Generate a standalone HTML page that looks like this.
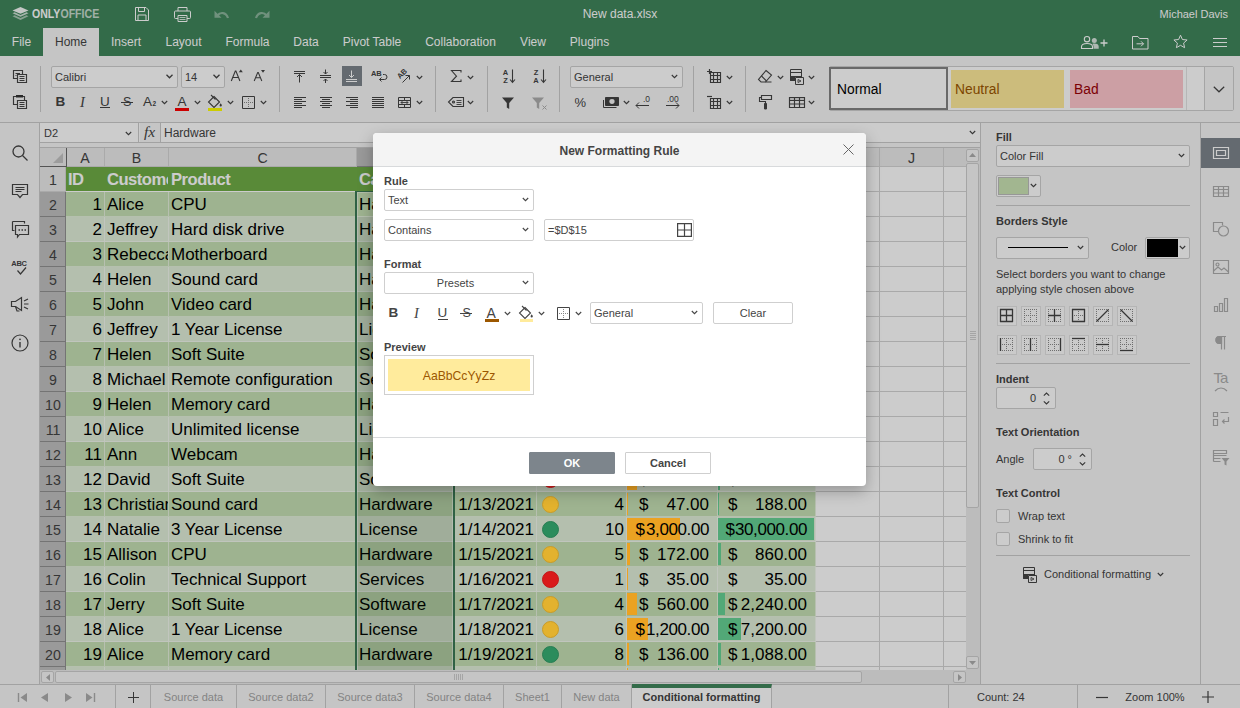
<!DOCTYPE html>
<html lang="en">
<head>
<meta charset="utf-8">
<title>New data.xlsx</title>
<style>
*{box-sizing:border-box;margin:0;padding:0}
html,body{width:1240px;height:708px;overflow:hidden;background:#f7f7f7}
body{font-family:"Liberation Sans",Arial,sans-serif;font-size:11px;color:#444;position:relative}
.abs{position:absolute}
svg{display:block;overflow:visible}
/* header */
#hdr{position:absolute;left:0;top:0;width:1240px;height:56px;background:#40865c;color:#fff}
#hdr .title{position:absolute;left:0;width:1240px;top:7px;text-align:center;font-size:12px;line-height:14px}
#hdr .user{position:absolute;right:12px;top:7px;font-size:11px;line-height:14px}
#hdr .logo{position:absolute;left:11.500px;top:7px}
#hdr .logotxt{position:absolute;left:31.500px;top:7px;font-size:12.300px;line-height:14px;font-weight:bold;color:#fff;transform:scaleX(.86);transform-origin:0 0;white-space:nowrap}
#hdr .logotxt span{opacity:.72}
.tab{position:absolute;top:28px;height:28px;line-height:28px;font-size:12px;text-align:center;color:#fff}
.tab.act{background:#f7f7f7;color:#444}
.hic{position:absolute}
/* toolbar */
#tb{position:absolute;left:0;top:56px;width:1240px;height:67px;background:#f7f7f7;border-bottom:1px solid #cbcbcb}
.sep{position:absolute;top:66px;width:1px;height:46px;background:#cbcbcb}
.combo{position:absolute;height:22px;background:#fff;border:1px solid #cfcfcf;border-radius:2px;font-size:11px;line-height:20px;padding-left:3px;color:#444;white-space:nowrap}
.combo .car{position:absolute;right:4px;top:7px}
.ti{position:absolute;width:20px;height:20px}
.car{width:7px;height:5px}
/* left */
#left{position:absolute;left:0;top:123px;width:40px;height:561px;background:#f7f7f7;border-right:1px solid #cbcbcb}
/* formula bar */
#fb{position:absolute;left:40px;top:123px;width:940px;height:20px;background:#fff;border-bottom:1px solid #cbcbcb}
#fb .name{position:absolute;left:0;top:0;width:99px;height:19px;border-right:1px solid #cbcbcb;line-height:21px;padding-left:4px;font-size:11px}
#fb .fx{position:absolute;left:100px;top:0;width:21px;height:19px;border-right:1px solid #cbcbcb;background:#f7f7f7}
#fb .val{position:absolute;left:124px;top:0;line-height:20px;font-size:12px}
#gap{position:absolute;left:40px;top:143px;width:940px;height:5px;background:#f7f7f7;border-bottom:1px solid #cbcbcb}
/* grid */
#grid{position:absolute;left:40px;top:148px;width:926px;height:522px;background:#fff;overflow:hidden;font-family:"Liberation Sans",Arial,sans-serif}
.ch{position:absolute;top:0;height:19px;background:#ebebeb;border-right:1px solid #d5d5d5;border-bottom:1px solid #d5d5d5;text-align:center;font-size:14.2px;line-height:21px;color:#444}
.ch.sel{background:#c1c1c1;border-color:#929292}
.corner{position:absolute;left:0;top:0;width:27px;height:19px;background:#ebebeb;border-right:1px solid #6a6a6a;border-bottom:1px solid #6a6a6a}
.corner i{position:absolute;right:3px;bottom:3px;width:0;height:0;border-left:10px solid transparent;border-bottom:10px solid #c4c4c4}
.rh{position:absolute;left:0;width:26px;height:25px;background:#ebebeb;border-right:1px solid #d5d5d5;border-bottom:1px solid #d5d5d5;text-align:center;font-size:14.2px;line-height:27px;color:#444;padding-left:1px;overflow:hidden}
.rh.sel{background:#c1c1c1;border-color:#929292}
.vl{position:absolute;top:19px;width:1px;height:504px;background:#d4d4d4}
.hl{position:absolute;left:26px;width:901px;height:1px;background:#d4d4d4}
.trow{position:absolute;left:26px;width:750px;height:25px;border-bottom:1px solid rgba(255,255,255,.5);font-size:17px;line-height:26.500px;color:#000}
.trow.thead{background:#70ad47;color:#fff;font-weight:bold;border-bottom-color:#fff}
.trow.b1{background:#c6e0b4}
.trow.b2{background:#e2efda}
.trow .c{position:absolute;top:0;height:24px;overflow:hidden;white-space:nowrap;border-right:1px solid rgba(255,255,255,.55);padding:0 2px 0 2px}
.trow.thead .c{border-right-color:transparent;font-size:16.600px;letter-spacing:-.5px}
.trow .c.r{text-align:right}
.trow .c span{position:relative}
.trow .c em{position:absolute;left:12px;font-style:normal}
.trow .c.acc{padding-right:8px}
.trow .c.acc.h em{left:10px}
.trow .c.acc.tight{letter-spacing:-.4px}
.trow .c.acc.tight em{left:8.500px}
.trow .c.acc.h.tight em{left:7.500px}
.ic{position:absolute;left:4.500px;top:3.500px;width:17px;height:17px;border-radius:50%;z-index:11}
.ic.y{background:#e3b22e;border:1px solid #c99c28}
.ic.g{background:#2b8c5c;border:1px solid #277d52}
.ic.r{background:#d91a1a;border:1px solid #c21616}
.bar{position:absolute;left:0;top:1px;height:22px;z-index:11}
.trow .c.acc span,.trow .c.acc em{z-index:12}
.bar.o{background:#eba222}
.bar.gr{background:#52a877}
.selbox{position:absolute;left:315px;top:43px;width:100px;height:490px;border:2px solid #3b7a55;border-top-width:1px;box-shadow:inset 0 0 0 1px rgba(255,255,255,.45)}
.seltint{position:absolute;left:317px;top:69px;width:97px;height:470px;background:rgba(20,60,20,.12)}

.sbtn{background:#f7f7f7;border:1px solid #cfcfcf;border-radius:2px}
.sthumb{background:#f7f7f7;border:1px solid #cfcfcf;border-radius:2px}
#rp{position:absolute;left:981px;top:123px;width:220px;height:561px;background:#f7f7f7;border-left:0;border-right:1px solid #cbcbcb}
#rpb{position:absolute}
#rp .lb{position:absolute;font-weight:bold;font-size:11px;line-height:14px;white-space:nowrap}
#rp .tx{position:absolute;font-size:11px;line-height:14px;white-space:nowrap}
#rp .hr{position:absolute;left:15px;width:194px;height:1px;background:#cbcbcb}
#rp .bb{position:absolute;width:20px;height:20px;background:#fdfdfd;box-shadow:inset 0 0 0 1px #e3e3e3}
#rp .bb svg{width:20px;height:20px}
#rp .spin .v{position:absolute;top:0}
#rp .cb{position:absolute;width:14px;height:14px;background:#fff;border:1px solid #cfcfcf;border-radius:2px}
#rs{position:absolute;left:1201px;top:123px;width:39px;height:561px;background:#f7f7f7}
#rs .ri{position:absolute;left:10px;width:20px;height:20px}
#sb{position:absolute;left:0;top:684px;width:1240px;height:24px;background:#f7f7f7;border-top:1px solid #cbcbcb;font-size:11px}
#sb .vs{position:absolute;top:0;width:1px;height:23px;background:#cbcbcb}
#sb .st{position:absolute;top:0;height:23px;line-height:24px;text-align:center;color:#a5a5a5;border-right:1px solid #cbcbcb;font-size:11px}
#sb .st.act{background:#fff;color:#444;font-weight:bold;border-top:4px solid #40865c;line-height:19px;top:-1px;height:24px}
#mask{z-index:10;position:absolute;left:0;top:0;width:1240px;height:708px;background:rgba(0,0,0,.2)}
#dli{position:absolute;left:1px;top:0;width:492px;height:353px}
#dlg{z-index:20;position:absolute;left:373px;top:133px;width:493px;height:353px;background:#fff;border-radius:4px;box-shadow:0 5px 15px rgba(0,0,0,.28);}
#dlg .dh{position:absolute;left:-1px;top:0;width:493px;height:34px;background:#f4f4f4;border-bottom:1px solid #d8dadc;border-radius:4px 4px 0 0;text-align:center;font-weight:bold;font-size:12px;line-height:36px;color:#444}
#dlg .dl{position:absolute;font-weight:bold;font-size:11px;line-height:14px}
#dlg .btn{position:absolute;width:86px;height:22px;border:1px solid #cfcfcf;border-radius:1px;background:#fff;text-align:center;font-weight:bold;font-size:11px;line-height:20px;color:#444}
#dlg .btn.pri{background:#7d858c;border-color:#7d858c;color:#fff}
</style>
</head>
<body>

<div id="hdr">
  <svg class="logo" width="17" height="14" viewBox="0 0 17 14"><path d="M8.500 0L16.500 3.400L8.500 6.800L.5 3.400Z" fill="#fff" fill-opacity=".95"/><path d="M2.600 5.300L.5 6.300L8.500 9.800L16.500 6.300L14.400 5.300L8.500 7.900Z" fill="#fff" fill-opacity=".75"/><path d="M2.600 8.300L.5 9.300L8.500 12.900L16.500 9.300L14.400 8.300L8.500 10.900Z" fill="#fff" fill-opacity=".55"/></svg>
  <div class="logotxt">ONLY<span>OFFICE</span></div>
  <svg class="hic" style="left:134.500px;top:6.500px" width="14" height="14" viewBox="0 0 14 14" fill="none" stroke="#fff" stroke-width="1"><path d="M.500 .500h10.500l2.500 2.500v10.500h-13z"/><path d="M3.500 .500v4h6v-4M3 13.500v-5.500h8v5.500"/></svg>
  <svg class="hic" style="left:173.500px;top:6.500px" width="17" height="15" viewBox="0 0 17 15" fill="none" stroke="#fff" stroke-width="1"><path d="M4 4v-3.500h9v3.500M4 11.500h-2.500a1 1 0 0 1-1-1v-5.500a1 1 0 0 1 1-1h14a1 1 0 0 1 1 1v5.500a1 1 0 0 1-1 1h-2.500"/><path d="M4 8.500h9v6h-9z"/><path d="M5.500 10.500h6M5.500 12.500h6" stroke-width=".8"/></svg>
  <svg class="hic" style="left:214px;top:10px;opacity:.4" width="15" height="9" viewBox="0 0 15 9"><path d="M.5 .800v7h7z" fill="#fff"/><path d="M3.500 5.500c2.500-3.500 8.500-3.800 10.500 2.500" fill="none" stroke="#fff" stroke-width="2.200"/></svg>
  <svg class="hic" style="left:255px;top:10px;opacity:.4" width="15" height="9" viewBox="0 0 15 9"><path d="M14.500 .800v7h-7z" fill="#fff"/><path d="M11.500 5.500c-2.500-3.500-8.500-3.800-10.500 2.500" fill="none" stroke="#fff" stroke-width="2.200"/></svg>
  <div class="title">New data.xlsx</div>
  <div class="user">Michael Davis</div>
  <div class="tab" style="left:0;width:43px">File</div>
  <div class="tab act" style="left:43px;width:56px">Home</div>
  <div class="tab" style="left:99px;width:54px">Insert</div>
  <div class="tab" style="left:153px;width:61px">Layout</div>
  <div class="tab" style="left:214px;width:67px">Formula</div>
  <div class="tab" style="left:281px;width:50px">Data</div>
  <div class="tab" style="left:331px;width:82px">Pivot Table</div>
  <div class="tab" style="left:413px;width:95px">Collaboration</div>
  <div class="tab" style="left:508px;width:50px">View</div>
  <div class="tab" style="left:558px;width:63px">Plugins</div>
  <!-- right icons -->
  <svg class="hic" style="left:1080px;top:34px" width="30" height="16" viewBox="0 0 30 16" fill="none" stroke="#fff" stroke-width="1.100"><circle cx="7" cy="5.200" r="2.700"/><path d="M1.500 14.500v-1.700c0-2 1.800-3.300 5.500-3.300s5.500 1.300 5.500 3.300v1.700z"/><circle cx="14.300" cy="6.500" r="2.500" fill="#fff" fill-opacity=".8" stroke="none"/><path d="M13.500 14.800v-2.300c0-1-.4-1.900-1.200-2.600c.6-.2 1.300-.3 2.100-.3c2.800 0 4.300 1.200 4.300 3v2.200z" fill="#fff" fill-opacity=".8" stroke="none"/><path d="M24 5.500v7M20.500 9h7" stroke-width="1.300"/></svg>
  <svg class="hic" style="left:1132px;top:36px" width="17" height="14" viewBox="0 0 17 14" fill="none" stroke="#fff" stroke-width="1"><path d="M.500 .500h5.500l1.500 2h8.500v10.500h-15.500z"/><path d="M4.500 7.800h7M9 5.300l2.500 2.500-2.500 2.500"/></svg>
  <svg class="hic" style="left:1173px;top:34px" width="15" height="15" viewBox="0 0 15 15" fill="none" stroke="#fff" stroke-width="1"><path d="M7.500 1.200l1.900 4.300 4.700.5-3.500 3.100 1 4.600-4.100-2.400-4.100 2.400 1-4.600-3.500-3.100 4.700-.5z"/></svg>
  <svg class="hic" style="left:1213px;top:38px" width="14" height="9" viewBox="0 0 14 9" fill="none" stroke="#fff" stroke-width="1"><path d="M0 .500h14M0 4.500h14M0 8.500h14"/></svg>
</div>
<div id="tb"></div>
<!-- toolbar content (absolute to body) -->
<div id="tbc">
<!-- copy / paste -->
<svg class="ti" style="left:10px;top:67px" viewBox="0 0 20 20" fill="none" stroke="#444" stroke-width="1.150"><path d="M12.500 7v-3.500h-9v8h3.500"/><path d="M5.500 6.500h4.500M5.500 8.500h1" stroke-width="1"/><path d="M7.500 7.500h9v8h-9z"/><path d="M9.500 9.500h5M9.500 11.500h5M9.500 13.500h5"/></svg>
<svg class="ti" style="left:10px;top:92px" viewBox="0 0 20 20" fill="none" stroke="#444" stroke-width="1.150"><path d="M6.500 4.500h-3v8h3.500M12.500 4.500h2v3.500"/><path d="M6 3h7v2.500h-7z" fill="#333" stroke="none"/><path d="M7.500 8.500h9v8h-9z"/><path d="M9.500 10.500h5M9.500 12.500h5M9.500 14.500h5"/></svg>
<div class="sep" style="left:40px"></div>
<div class="combo" style="left:51px;top:66px;width:127px">Calibri<svg class="car" viewBox="0 0 7 5" fill="none" stroke="#444" stroke-width="1.3"><path d="M.5.8l3 3 3-3"/></svg></div>
<div class="combo" style="left:181px;top:66px;width:44px">14<svg class="car" viewBox="0 0 7 5" fill="none" stroke="#444" stroke-width="1.3"><path d="M.5.8l3 3 3-3"/></svg></div>
<!-- inc/dec font -->
<svg class="ti" style="left:226px;top:66px" viewBox="0 0 20 20" fill="none" stroke="#444" stroke-width="1.100"><path d="M5.300 15l4-10h.6l4 10M6.800 11.500h5.600"/><path d="M12.800 6.300l2-2.800 2 2.800z" fill="#444" stroke="none"/></svg>
<svg class="ti" style="left:249px;top:66px" viewBox="0 0 20 20" fill="none" stroke="#444" stroke-width="1.050"><path d="M5.200 15l3.500-8.500h.6l3.500 8.500M6.500 11.800h5"/><path d="M12 4l2 2.800 2-2.800z" fill="#444" stroke="none"/></svg>
<div class="sep" style="left:279px"></div>
<!-- B I U S -->
<div class="abs" style="left:55.500px;top:92px;font:bold 13.500px/20px 'Liberation Sans',sans-serif;color:#444">B</div>
<div class="abs" style="left:80px;top:92px;font:italic 14.500px/20px 'Liberation Serif',serif;color:#444">I</div>
<div class="abs" style="left:100px;top:92px;font:13.500px/20px 'Liberation Sans',sans-serif;color:#444">U</div>
<div class="abs" style="left:100px;top:107px;width:10px;height:1px;background:#444"></div>
<div class="abs" style="left:123px;top:92px;font:12.500px/20px 'Liberation Sans',sans-serif;color:#444">S</div>
<div class="abs" style="left:121px;top:101.500px;width:12px;height:1px;background:#444"></div>
<div class="abs" style="left:143px;top:92px;font:13.500px/20px 'Liberation Sans',sans-serif;color:#444">A<span style="font-size:6.500px;font-weight:bold;margin-left:.5px">2</span></div>
<svg class="abs car" style="left:161px;top:100px" viewBox="0 0 7 5" fill="none" stroke="#444" stroke-width="1.100"><path d="M.800 1l2.700 2.700 2.700-2.700"/></svg>
<div class="abs" style="left:177.500px;top:91.500px;font:13.500px/20px 'Liberation Sans',sans-serif;color:#444">A</div>
<div class="abs" style="left:175px;top:108px;width:14px;height:3px;background:#ff0000"></div>
<svg class="abs car" style="left:194px;top:100px" viewBox="0 0 7 5" fill="none" stroke="#444" stroke-width="1.100"><path d="M.800 1l2.700 2.700 2.700-2.700"/></svg>
<svg class="ti" style="left:205px;top:91px" viewBox="0 0 20 20" fill="none" stroke="#444" stroke-width="1.100"><path d="M9 5.500l5.500 5.500-5.500 5.500-5.500-5.500z"/><path d="M6 4l4.500 4.500"/><path d="M15.700 12.300c.800 1.100 1.100 1.700 1.100 2.200a1.100 1.100 0 0 1-2.200 0c0-.500.300-1.100 1.100-2.200z" fill="#444" stroke="none"/></svg>
<div class="abs" style="left:208px;top:108px;width:14px;height:3px;background:#ffff00"></div>
<svg class="abs car" style="left:227px;top:100px" viewBox="0 0 7 5" fill="none" stroke="#444" stroke-width="1.100"><path d="M.800 1l2.700 2.700 2.700-2.700"/></svg>
<svg class="ti" style="left:238px;top:92px" viewBox="0 0 20 20" fill="none" stroke="#444"><path d="M4.500 4.500h12v12h-12z"/><path d="M10.500 6v10M6 10.500h10" stroke-dasharray="1 1" stroke="#888"/></svg>
<svg class="abs car" style="left:260px;top:100px" viewBox="0 0 7 5" fill="none" stroke="#444" stroke-width="1.100"><path d="M.800 1l2.700 2.700 2.700-2.700"/></svg>
<!-- valign -->
<svg class="ti" style="left:290px;top:66px" viewBox="0 0 20 20" fill="none" stroke="#444"><path d="M4 5.500h11M4 7.500h11M9.500 16.500v-8M7 11l2.500-2.500 2.500 2.500"/></svg>
<svg class="ti" style="left:316px;top:66px" viewBox="0 0 20 20" fill="none" stroke="#444"><path d="M4 9.500h11M4 11.500h11M9.500 3.500v4.500M7.500 6l2 2 2-2M9.500 17v-4M7.500 15l2-2 2 2"/></svg>
<div class="abs" style="left:342px;top:66px;width:20px;height:20px;background:#7d858c"></div>
<svg class="ti" style="left:342px;top:66px" viewBox="0 0 20 20" fill="none" stroke="#fff"><path d="M4 13.500h11M4 15.500h11M9.500 4.500v7M7 9l2.500 2.500 2.500-2.500"/></svg>
<svg class="ti" style="left:369px;top:64.500px" viewBox="0 0 20 20" fill="none" stroke="#444"><path d="M14 9.500h1.500a2.500 2.500 0 0 1 0 5h-5M12.500 12.500l-2 2 2 2"/></svg>
<div class="abs" style="left:371px;top:69px;font:bold 7.500px/10px 'Liberation Sans',sans-serif;color:#444;letter-spacing:-.2px">AB</div>
<svg class="ti" style="left:395px;top:66px" viewBox="0 0 20 20" fill="none" stroke="#444"><path d="M7.500 16.500l7-7M10.500 9.500h4v4"/></svg>
<div class="abs" style="left:396.500px;top:68.500px;font:bold 7.500px/10px 'Liberation Sans',sans-serif;color:#444;transform:rotate(-45deg);transform-origin:50% 50%">AB</div>
<svg class="abs car" style="left:416px;top:75px" viewBox="0 0 7 5" fill="none" stroke="#444" stroke-width="1.100"><path d="M.800 1l2.700 2.700 2.700-2.700"/></svg>
<!-- halign -->
<svg class="ti" style="left:290px;top:92px" viewBox="0 0 20 20" fill="none" stroke="#444"><path d="M4 5.500h12M4 7.500h8M4 9.500h12M4 11.500h8M4 13.500h12M4 15.500h8"/></svg>
<svg class="ti" style="left:316px;top:92px" viewBox="0 0 20 20" fill="none" stroke="#444"><path d="M4 5.500h12M6 7.500h8M4 9.500h12M6 11.500h8M4 13.500h12M6 15.500h8"/></svg>
<svg class="ti" style="left:342px;top:92px" viewBox="0 0 20 20" fill="none" stroke="#444"><path d="M4 5.500h12M8 7.500h8M4 9.500h12M8 11.500h8M4 13.500h12M8 15.500h8"/></svg>
<svg class="ti" style="left:368px;top:92px" viewBox="0 0 20 20" fill="none" stroke="#444"><path d="M4 5.500h12M4 7.500h12M4 9.500h12M4 11.500h12M4 13.500h12M4 15.500h12"/></svg>
<svg class="ti" style="left:394px;top:92px" viewBox="0 0 20 20" fill="none" stroke="#444"><path d="M4.500 5.500h12v10h-12zM4.500 8.500h12M4.500 12.500h12M10.500 5.500v3M10.500 12.500v3"/><path d="M7 10.500h7M8.500 9l-1.500 1.500 1.500 1.500M12.500 9l1.500 1.500-1.500 1.500" stroke-width=".9"/></svg>
<svg class="abs car" style="left:416px;top:100px" viewBox="0 0 7 5" fill="none" stroke="#444" stroke-width="1.100"><path d="M.800 1l2.700 2.700 2.700-2.700"/></svg>
<div class="sep" style="left:435px"></div>
<!-- sum / named ranges -->
<svg class="ti" style="left:446px;top:66px" viewBox="0 0 20 20" fill="none" stroke="#444" stroke-width="1.100"><path d="M15 6.500v-2h-9.500l5 5.700-5 5.300h9.500v-2"/></svg>
<svg class="abs car" style="left:467px;top:75px" viewBox="0 0 7 5" fill="none" stroke="#444" stroke-width="1.100"><path d="M.800 1l2.700 2.700 2.700-2.700"/></svg>
<svg class="ti" style="left:446px;top:92px" viewBox="0 0 20 20" fill="none" stroke="#444" stroke-width="1.100"><path d="M7 5.500h10.500v9h-10.500l-4.500-4.500z"/><circle cx="7.500" cy="10" r="1"/><path d="M10.500 8.500h5M10.500 10.500h5M10.500 12.500h5" stroke-width=".9"/></svg>
<svg class="abs car" style="left:467px;top:100px" viewBox="0 0 7 5" fill="none" stroke="#444" stroke-width="1.100"><path d="M.800 1l2.700 2.700 2.700-2.700"/></svg>
<div class="sep" style="left:487px"></div>
<!-- sort -->
<div class="abs" style="left:501.500px;top:68.500px;font:bold 7.500px/8px 'Liberation Sans',sans-serif;color:#444;width:8px;text-align:center">A<br>Z</div>
<svg class="ti" style="left:502px;top:66px" viewBox="0 0 20 20" fill="none" stroke="#444" stroke-width="1.100"><path d="M10.500 3.500v12.500M8 13.500l2.500 2.800 2.500-2.800"/></svg>
<div class="abs" style="left:532px;top:68.500px;font:bold 7.500px/8px 'Liberation Sans',sans-serif;color:#444;width:8px;text-align:center">Z<br>A</div>
<svg class="ti" style="left:533px;top:66px" viewBox="0 0 20 20" fill="none" stroke="#444" stroke-width="1.100"><path d="M10.500 3.500v12.500M8 13.500l2.500 2.800 2.500-2.800"/></svg>
<svg class="ti" style="left:498px;top:93px" viewBox="0 0 20 20"><path d="M4 4.500h12l-4.800 5.500v6l-2.400-1.500v-4.500z" fill="#444"/></svg>
<svg class="ti" style="left:529px;top:93px;opacity:.4" viewBox="0 0 20 20"><path d="M3 4.500h12l-4.800 5.500v6l-2.400-1.500v-4.500z" fill="#444"/><path d="M13.500 12.500l4 4M17.500 12.500l-4 4" stroke="#444" fill="none"/></svg>
<div class="sep" style="left:559px"></div>
<!-- number format -->
<div class="combo" style="left:570px;top:66px;width:113px">General<svg class="car" viewBox="0 0 7 5" fill="none" stroke="#444" stroke-width="1.100"><path d="M.800 1l2.700 2.700 2.700-2.700"/></svg></div>
<div class="abs" style="left:574.500px;top:93px;font:13px/20px 'Liberation Sans',sans-serif;color:#444">%</div>
<svg class="ti" style="left:601px;top:93px" viewBox="0 0 20 20" fill="none" stroke="#444"><path d="M2.500 7v7.500h13"/><path d="M4.500 4.500h13v8h-13z" fill="#444"/><ellipse cx="11" cy="8.500" rx="2.600" ry="2.400" fill="#f7f7f7" stroke="none"/></svg>
<svg class="abs car" style="left:623px;top:100px" viewBox="0 0 7 5" fill="none" stroke="#444" stroke-width="1.100"><path d="M.800 1l2.700 2.700 2.700-2.700"/></svg>
<div class="abs" style="left:643px;top:94px;font:8.500px/10px 'Liberation Sans',sans-serif;color:#444">.0</div>
<svg class="ti" style="left:632px;top:91px" viewBox="0 0 20 20" fill="none" stroke="#444"><path d="M4 14.500h13M7 11.500l-3 3 3 3"/></svg>
<div class="abs" style="left:667px;top:94px;font:8.500px/10px 'Liberation Sans',sans-serif;color:#444">.00</div>
<svg class="ti" style="left:662px;top:91px" viewBox="0 0 20 20" fill="none" stroke="#444"><path d="M4 14.500h13M14 11.500l3 3-3 3"/></svg>
<div class="sep" style="left:693px"></div>
<!-- insert/delete cells -->
<svg class="ti" style="left:704px;top:66px" viewBox="0 0 20 20" fill="none" stroke="#444"><path d="M6.500 6.500h10v10h-10zM6.500 9.500h10M6.500 13.500h10M9.500 6.500v10M13.500 6.500v10" stroke-width="1.150"/><path d="M3 5.500h5M5.500 3v5" stroke-width="1.200"/></svg>
<svg class="abs car" style="left:726px;top:75px" viewBox="0 0 7 5" fill="none" stroke="#444" stroke-width="1.100"><path d="M.800 1l2.700 2.700 2.700-2.700"/></svg>
<svg class="ti" style="left:704px;top:92px" viewBox="0 0 20 20" fill="none" stroke="#444"><path d="M6.500 6.500h10v10h-10zM6.500 9.500h10M6.500 13.500h10M9.500 6.500v10M13.500 6.500v10" stroke-width="1.150"/><path d="M3 4.500h5" stroke-width="1.200"/></svg>
<svg class="abs car" style="left:726px;top:100px" viewBox="0 0 7 5" fill="none" stroke="#444" stroke-width="1.100"><path d="M.800 1l2.700 2.700 2.700-2.700"/></svg>
<div class="sep" style="left:745px"></div>
<!-- clear / cond fmt / paint / table -->
<svg class="ti" style="left:755px;top:66px" viewBox="0 0 20 20" fill="none" stroke="#444" stroke-width="1.100"><path d="M11 4.500l5.500 4.500-6 7h-4.500l-2.500-2.500z"/><path d="M6.500 10l5 5M10.500 16h6"/></svg>
<svg class="abs car" style="left:777px;top:75px" viewBox="0 0 7 5" fill="none" stroke="#444" stroke-width="1.100"><path d="M.800 1l2.700 2.700 2.700-2.700"/></svg>
<svg class="ti" style="left:786px;top:66px" viewBox="0 0 20 20" fill="none" stroke="#444"><path d="M4.500 3.500h11v11h-11zM4.500 6.500h11M4.500 10.500h11" /><path d="M4.500 10.500h4v4h-4z" fill="#444"/><path d="M9.500 11.500h8v7h-8z" fill="#f7f7f7"/><path d="M12 13.500l3 1.500-3 1.500z" stroke-width=".9"/></svg>
<svg class="abs car" style="left:808px;top:75px" viewBox="0 0 7 5" fill="none" stroke="#444" stroke-width="1.100"><path d="M.800 1l2.700 2.700 2.700-2.700"/></svg>
<svg class="ti" style="left:755px;top:92px" viewBox="0 0 20 20" fill="none" stroke="#444"><path d="M6.500 3.500h10v4h-10z" stroke-width="1.150"/><path d="M6.500 5.500h-2v4h6v2" stroke-width="1.100"/><path d="M9.500 11.500h2v5.500h-2z" fill="#444"/></svg>
<svg class="ti" style="left:786px;top:92px" viewBox="0 0 20 20" fill="none" stroke="#444"><path d="M3.500 5.500h15v10h-15zM3.500 8.500h15M3.500 12h15M8.500 5.500v10M13.500 5.500v10" stroke-width="1.150"/><path d="M3.500 5.500h15v3h-15z" fill="#444" fill-opacity=".15"/></svg>
<svg class="abs car" style="left:808px;top:100px" viewBox="0 0 7 5" fill="none" stroke="#444" stroke-width="1.100"><path d="M.800 1l2.700 2.700 2.700-2.700"/></svg>
<!-- styles gallery -->
<div class="abs" style="left:829px;top:66px;width:405px;height:45px;background:#fff;border:1px solid #cfcfcf;border-radius:2px"></div>
<div class="abs" style="left:829px;top:67px;width:119px;height:43px;border:2px solid #848484;background:#fff;font:13.800px/41px 'Liberation Sans',sans-serif;color:#000;padding-left:6px">Normal</div>
<div class="abs" style="left:951px;top:70px;width:113px;height:38px;background:#ffeb9c;font:13.800px/39px 'Liberation Sans',sans-serif;color:#9c5700;padding-left:4px">Neutral</div>
<div class="abs" style="left:1070px;top:70px;width:113px;height:38px;background:#ffc7ce;font:13.800px/39px 'Liberation Sans',sans-serif;color:#9c0006;padding-left:4px">Bad</div>
<div class="abs" style="left:1204px;top:67px;width:1px;height:43px;background:#cfcfcf"></div>
<div class="abs" style="left:1186px;top:67px;width:1px;height:43px;background:#e4e4e4"></div>
<div class="abs" style="left:1205px;top:67px;width:28px;height:43px;background:#f7f7f7"></div>
<svg class="abs" style="left:1213px;top:86px" width="12" height="7" viewBox="0 0 12 7" fill="none" stroke="#444" stroke-width="1.200"><path d="M.8.800l5.200 5 5.200-5"/></svg>
</div>
<!-- left panel -->
<div id="left">
<svg class="abs" style="left:10px;top:20px" width="20" height="20" viewBox="0 0 20 20" fill="none" stroke="#444" stroke-width="1.300"><circle cx="8.500" cy="8.500" r="5.500"/><path d="M12.500 12.500l5 5"/></svg>
<svg class="abs" style="left:10px;top:58px" width="20" height="20" viewBox="0 0 20 20" fill="none" stroke="#444" stroke-width="1.200"><path d="M2.500 3.500h15v10h-5l-2.500 3-2.500-3h-5z"/><path d="M5.500 6.500h9M5.500 8.500h9M5.500 10.500h6" stroke-width="1"/></svg>
<svg class="abs" style="left:10px;top:96px" width="20" height="20" viewBox="0 0 20 20" fill="none" stroke="#444" stroke-width="1.200"><path d="M2.500 2.500h12v2M2.500 2.500v9h2"/><path d="M5.500 6.500h13v9h-9l-2 2.500v-2.500h-2z"/><path d="M8.500 11h1.500M11.500 11h1.500M14.500 11h1.500" stroke-width="1.600"/></svg>
<div class="abs" style="left:9px;top:136px;width:20px;text-align:center;font:bold 7.500px/10px 'Liberation Sans',sans-serif;color:#444;letter-spacing:-.2px">ABC</div>
<svg class="abs" style="left:11px;top:144px" width="20" height="10" viewBox="0 0 20 10" fill="none" stroke="#444" stroke-width="1.200"><path d="M6.500 3.500l3 3.500 5.500-6.500"/></svg>
<svg class="abs" style="left:9px;top:171px" width="22" height="20" viewBox="0 0 22 20" fill="none" stroke="#444" stroke-width="1.200"><path d="M2.500 7.500h4l6-4v13l-6-4h-4z"/><path d="M6.500 12.500l1.500 4.500h2.500"/><path d="M15 7l4-2M15 10h4.500M15 13l4 2"/></svg>
<svg class="abs" style="left:10px;top:210px" width="20" height="20" viewBox="0 0 20 20" fill="none" stroke="#444" stroke-width="1.200"><circle cx="10" cy="10" r="8"/><path d="M10 9v5.500" stroke-width="1.400"/><circle cx="10" cy="6.300" r=".9" fill="#444" stroke="none"/></svg>
</div>
<!-- formula bar -->
<div id="fb">
  <div class="name">D2<svg class="abs car" style="left:85px;top:8px" viewBox="0 0 7 5" fill="none" stroke="#444" stroke-width="1.100"><path d="M.800 1l2.700 2.700 2.700-2.700"/></svg></div>
  <div class="fx"><span style="position:absolute;left:4px;top:-1px;font:italic 15.500px/19px 'Liberation Serif',serif;color:#444">fx</span></div>
  <div class="val">Hardware</div>
  <svg class="abs car" style="left:928.500px;top:7px" viewBox="0 0 7 5" fill="none" stroke="#444" stroke-width="1.100"><path d="M.800 1l2.700 2.700 2.700-2.700"/></svg>
</div>
<div id="gap"></div>

<div id="grid">
<div class="ch" style="left:26px;width:39px">A</div>
<div class="ch" style="left:65px;width:64px">B</div>
<div class="ch" style="left:129px;width:188px">C</div>
<div class="ch sel" style="left:317px;width:98px">D</div>
<div class="ch" style="left:415px;width:82px">E</div>
<div class="ch" style="left:497px;width:90px">F</div>
<div class="ch" style="left:587px;width:91px">G</div>
<div class="ch" style="left:678px;width:98px">H</div>
<div class="ch" style="left:776px;width:64px">I</div>
<div class="ch" style="left:840px;width:64px">J</div>
<div class="ch" style="left:904px;width:23px"></div>
<div class="corner"><i></i></div>
<div class="rh" style="top:19px">1</div>
<div class="rh sel" style="top:44px">2</div>
<div class="rh sel" style="top:69px">3</div>
<div class="rh sel" style="top:94px">4</div>
<div class="rh sel" style="top:119px">5</div>
<div class="rh sel" style="top:144px">6</div>
<div class="rh sel" style="top:169px">7</div>
<div class="rh sel" style="top:194px">8</div>
<div class="rh sel" style="top:219px">9</div>
<div class="rh sel" style="top:244px">10</div>
<div class="rh sel" style="top:269px">11</div>
<div class="rh sel" style="top:294px">12</div>
<div class="rh sel" style="top:319px">13</div>
<div class="rh sel" style="top:344px">14</div>
<div class="rh sel" style="top:369px">15</div>
<div class="rh sel" style="top:394px">16</div>
<div class="rh sel" style="top:419px">17</div>
<div class="rh sel" style="top:444px">18</div>
<div class="rh sel" style="top:469px">19</div>
<div class="rh sel" style="top:494px">20</div>
<div class="rh sel" style="top:519px">21</div>
<div class="vl" style="left:839px"></div>
<div class="vl" style="left:903px"></div>
<div class="vl" style="left:926px"></div>
<div class="hl" style="top:43px"></div>
<div class="hl" style="top:68px"></div>
<div class="hl" style="top:93px"></div>
<div class="hl" style="top:118px"></div>
<div class="hl" style="top:143px"></div>
<div class="hl" style="top:168px"></div>
<div class="hl" style="top:193px"></div>
<div class="hl" style="top:218px"></div>
<div class="hl" style="top:243px"></div>
<div class="hl" style="top:268px"></div>
<div class="hl" style="top:293px"></div>
<div class="hl" style="top:318px"></div>
<div class="hl" style="top:343px"></div>
<div class="hl" style="top:368px"></div>
<div class="hl" style="top:393px"></div>
<div class="hl" style="top:418px"></div>
<div class="hl" style="top:443px"></div>
<div class="hl" style="top:468px"></div>
<div class="hl" style="top:493px"></div>
<div class="hl" style="top:518px"></div>
<div class="hl" style="top:543px"></div>
<div class="trow thead" style="top:19px">
<div class="c" style="left:0px;width:39px"><span>ID</span></div>
<div class="c" style="left:39px;width:64px"><span>Customer</span></div>
<div class="c" style="left:103px;width:188px"><span>Product</span></div>
<div class="c" style="left:291px;width:98px"><span>Category</span></div>
<div class="c" style="left:389px;width:82px"><span>Date</span></div>
<div class="c" style="left:471px;width:90px"><span>Qty</span></div>
<div class="c" style="left:561px;width:91px"><span>Price</span></div>
<div class="c" style="left:652px;width:98px"><span>Total</span></div>
</div>
<div class="trow b1" style="top:44px">
<div class="c r" style="left:0px;width:39px"><span>1</span></div>
<div class="c " style="left:39px;width:64px"><span>Alice</span></div>
<div class="c " style="left:103px;width:188px"><span>CPU</span></div>
<div class="c " style="left:291px;width:98px"><span>Hardware</span></div>
<div class="c r" style="left:389px;width:82px"><span>1/1/2021</span></div>
<div class="c r" style="left:471px;width:90px"><i class="ic y"></i><span>4</span></div>
<div class="c r acc" style="left:561px;width:91px"><b class="bar o" style="width:3px"></b><em>$</em><span>172.00</span></div>
<div class="c r acc h" style="left:652px;width:98px"><b class="bar gr" style="width:2px"></b><em>$</em><span>688.00</span></div>
</div>
<div class="trow b2" style="top:69px">
<div class="c r" style="left:0px;width:39px"><span>2</span></div>
<div class="c " style="left:39px;width:64px"><span>Jeffrey</span></div>
<div class="c " style="left:103px;width:188px"><span>Hard disk drive</span></div>
<div class="c " style="left:291px;width:98px"><span>Hardware</span></div>
<div class="c r" style="left:389px;width:82px"><span>1/2/2021</span></div>
<div class="c r" style="left:471px;width:90px"><i class="ic y"></i><span>5</span></div>
<div class="c r acc" style="left:561px;width:91px"><b class="bar o" style="width:2px"></b><em>$</em><span>120.00</span></div>
<div class="c r acc h" style="left:652px;width:98px"><b class="bar gr" style="width:2px"></b><em>$</em><span>600.00</span></div>
</div>
<div class="trow b1" style="top:94px">
<div class="c r" style="left:0px;width:39px"><span>3</span></div>
<div class="c " style="left:39px;width:64px"><span>Rebecca</span></div>
<div class="c " style="left:103px;width:188px"><span>Motherboard</span></div>
<div class="c " style="left:291px;width:98px"><span>Hardware</span></div>
<div class="c r" style="left:389px;width:82px"><span>1/3/2021</span></div>
<div class="c r" style="left:471px;width:90px"><i class="ic y"></i><span>4</span></div>
<div class="c r acc" style="left:561px;width:91px"><b class="bar o" style="width:4px"></b><em>$</em><span>250.00</span></div>
<div class="c r acc h" style="left:652px;width:98px"><b class="bar gr" style="width:3px"></b><em>$</em><span>1,000.00</span></div>
</div>
<div class="trow b2" style="top:119px">
<div class="c r" style="left:0px;width:39px"><span>4</span></div>
<div class="c " style="left:39px;width:64px"><span>Helen</span></div>
<div class="c " style="left:103px;width:188px"><span>Sound card</span></div>
<div class="c " style="left:291px;width:98px"><span>Hardware</span></div>
<div class="c r" style="left:389px;width:82px"><span>1/4/2021</span></div>
<div class="c r" style="left:471px;width:90px"><i class="ic y"></i><span>4</span></div>
<div class="c r acc" style="left:561px;width:91px"><b class="bar o" style="width:1px"></b><em>$</em><span>47.00</span></div>
<div class="c r acc h" style="left:652px;width:98px"><b class="bar gr" style="width:1px"></b><em>$</em><span>188.00</span></div>
</div>
<div class="trow b1" style="top:144px">
<div class="c r" style="left:0px;width:39px"><span>5</span></div>
<div class="c " style="left:39px;width:64px"><span>John</span></div>
<div class="c " style="left:103px;width:188px"><span>Video card</span></div>
<div class="c " style="left:291px;width:98px"><span>Hardware</span></div>
<div class="c r" style="left:389px;width:82px"><span>1/5/2021</span></div>
<div class="c r" style="left:471px;width:90px"><i class="ic y"></i><span>4</span></div>
<div class="c r acc" style="left:561px;width:91px"><b class="bar o" style="width:5px"></b><em>$</em><span>300.00</span></div>
<div class="c r acc h" style="left:652px;width:98px"><b class="bar gr" style="width:4px"></b><em>$</em><span>1,200.00</span></div>
</div>
<div class="trow b2" style="top:169px">
<div class="c r" style="left:0px;width:39px"><span>6</span></div>
<div class="c " style="left:39px;width:64px"><span>Jeffrey</span></div>
<div class="c " style="left:103px;width:188px"><span>1 Year License</span></div>
<div class="c " style="left:291px;width:98px"><span>License</span></div>
<div class="c r" style="left:389px;width:82px"><span>1/6/2021</span></div>
<div class="c r" style="left:471px;width:90px"><i class="ic y"></i><span>6</span></div>
<div class="c r acc tight" style="left:561px;width:91px"><b class="bar o" style="width:21px"></b><em>$</em><span>1,200.00</span></div>
<div class="c r acc h" style="left:652px;width:98px"><b class="bar gr" style="width:23px"></b><em>$</em><span>7,200.00</span></div>
</div>
<div class="trow b1" style="top:194px">
<div class="c r" style="left:0px;width:39px"><span>7</span></div>
<div class="c " style="left:39px;width:64px"><span>Helen</span></div>
<div class="c " style="left:103px;width:188px"><span>Soft Suite</span></div>
<div class="c " style="left:291px;width:98px"><span>Software</span></div>
<div class="c r" style="left:389px;width:82px"><span>1/7/2021</span></div>
<div class="c r" style="left:471px;width:90px"><i class="ic y"></i><span>4</span></div>
<div class="c r acc" style="left:561px;width:91px"><b class="bar o" style="width:10px"></b><em>$</em><span>560.00</span></div>
<div class="c r acc h" style="left:652px;width:98px"><b class="bar gr" style="width:7px"></b><em>$</em><span>2,240.00</span></div>
</div>
<div class="trow b2" style="top:219px">
<div class="c r" style="left:0px;width:39px"><span>8</span></div>
<div class="c " style="left:39px;width:64px"><span>Michael</span></div>
<div class="c " style="left:103px;width:188px"><span>Remote configuration</span></div>
<div class="c " style="left:291px;width:98px"><span>Services</span></div>
<div class="c r" style="left:389px;width:82px"><span>1/8/2021</span></div>
<div class="c r" style="left:471px;width:90px"><i class="ic r"></i><span>1</span></div>
<div class="c r acc" style="left:561px;width:91px"><b class="bar o" style="width:1px"></b><em>$</em><span>35.00</span></div>
<div class="c r acc h" style="left:652px;width:98px"><b class="bar gr" style="width:0px"></b><em>$</em><span>35.00</span></div>
</div>
<div class="trow b1" style="top:244px">
<div class="c r" style="left:0px;width:39px"><span>9</span></div>
<div class="c " style="left:39px;width:64px"><span>Helen</span></div>
<div class="c " style="left:103px;width:188px"><span>Memory card</span></div>
<div class="c " style="left:291px;width:98px"><span>Hardware</span></div>
<div class="c r" style="left:389px;width:82px"><span>1/9/2021</span></div>
<div class="c r" style="left:471px;width:90px"><i class="ic g"></i><span>8</span></div>
<div class="c r acc" style="left:561px;width:91px"><b class="bar o" style="width:2px"></b><em>$</em><span>136.00</span></div>
<div class="c r acc h" style="left:652px;width:98px"><b class="bar gr" style="width:3px"></b><em>$</em><span>1,088.00</span></div>
</div>
<div class="trow b2" style="top:269px">
<div class="c r" style="left:0px;width:39px"><span>10</span></div>
<div class="c " style="left:39px;width:64px"><span>Alice</span></div>
<div class="c " style="left:103px;width:188px"><span>Unlimited license</span></div>
<div class="c " style="left:291px;width:98px"><span>License</span></div>
<div class="c r" style="left:389px;width:82px"><span>1/10/2021</span></div>
<div class="c r" style="left:471px;width:90px"><i class="ic g"></i><span>10</span></div>
<div class="c r acc tight" style="left:561px;width:91px"><b class="bar o" style="width:53px"></b><em>$</em><span>3,000.00</span></div>
<div class="c r acc h tight" style="left:652px;width:98px"><b class="bar gr" style="width:96px"></b><em>$</em><span>30,000.00</span></div>
</div>
<div class="trow b1" style="top:294px">
<div class="c r" style="left:0px;width:39px"><span>11</span></div>
<div class="c " style="left:39px;width:64px"><span>Ann</span></div>
<div class="c " style="left:103px;width:188px"><span>Webcam</span></div>
<div class="c " style="left:291px;width:98px"><span>Hardware</span></div>
<div class="c r" style="left:389px;width:82px"><span>1/11/2021</span></div>
<div class="c r" style="left:471px;width:90px"><i class="ic y"></i><span>4</span></div>
<div class="c r acc" style="left:561px;width:91px"><b class="bar o" style="width:1px"></b><em>$</em><span>80.00</span></div>
<div class="c r acc h" style="left:652px;width:98px"><b class="bar gr" style="width:1px"></b><em>$</em><span>320.00</span></div>
</div>
<div class="trow b2" style="top:319px">
<div class="c r" style="left:0px;width:39px"><span>12</span></div>
<div class="c " style="left:39px;width:64px"><span>David</span></div>
<div class="c " style="left:103px;width:188px"><span>Soft Suite</span></div>
<div class="c " style="left:291px;width:98px"><span>Software</span></div>
<div class="c r" style="left:389px;width:82px"><span>1/12/2021</span></div>
<div class="c r" style="left:471px;width:90px"><i class="ic r"></i><span>1</span></div>
<div class="c r acc" style="left:561px;width:91px"><b class="bar o" style="width:10px"></b><em>$</em><span>560.00</span></div>
<div class="c r acc h" style="left:652px;width:98px"><b class="bar gr" style="width:2px"></b><em>$</em><span>560.00</span></div>
</div>
<div class="trow b1" style="top:344px">
<div class="c r" style="left:0px;width:39px"><span>13</span></div>
<div class="c " style="left:39px;width:64px"><span>Christian</span></div>
<div class="c " style="left:103px;width:188px"><span>Sound card</span></div>
<div class="c " style="left:291px;width:98px"><span>Hardware</span></div>
<div class="c r" style="left:389px;width:82px"><span>1/13/2021</span></div>
<div class="c r" style="left:471px;width:90px"><i class="ic y"></i><span>4</span></div>
<div class="c r acc" style="left:561px;width:91px"><b class="bar o" style="width:1px"></b><em>$</em><span>47.00</span></div>
<div class="c r acc h" style="left:652px;width:98px"><b class="bar gr" style="width:1px"></b><em>$</em><span>188.00</span></div>
</div>
<div class="trow b2" style="top:369px">
<div class="c r" style="left:0px;width:39px"><span>14</span></div>
<div class="c " style="left:39px;width:64px"><span>Natalie</span></div>
<div class="c " style="left:103px;width:188px"><span>3 Year License</span></div>
<div class="c " style="left:291px;width:98px"><span>License</span></div>
<div class="c r" style="left:389px;width:82px"><span>1/14/2021</span></div>
<div class="c r" style="left:471px;width:90px"><i class="ic g"></i><span>10</span></div>
<div class="c r acc tight" style="left:561px;width:91px"><b class="bar o" style="width:53px"></b><em>$</em><span>3,000.00</span></div>
<div class="c r acc h tight" style="left:652px;width:98px"><b class="bar gr" style="width:96px"></b><em>$</em><span>30,000.00</span></div>
</div>
<div class="trow b1" style="top:394px">
<div class="c r" style="left:0px;width:39px"><span>15</span></div>
<div class="c " style="left:39px;width:64px"><span>Allison</span></div>
<div class="c " style="left:103px;width:188px"><span>CPU</span></div>
<div class="c " style="left:291px;width:98px"><span>Hardware</span></div>
<div class="c r" style="left:389px;width:82px"><span>1/15/2021</span></div>
<div class="c r" style="left:471px;width:90px"><i class="ic y"></i><span>5</span></div>
<div class="c r acc" style="left:561px;width:91px"><b class="bar o" style="width:3px"></b><em>$</em><span>172.00</span></div>
<div class="c r acc h" style="left:652px;width:98px"><b class="bar gr" style="width:3px"></b><em>$</em><span>860.00</span></div>
</div>
<div class="trow b2" style="top:419px">
<div class="c r" style="left:0px;width:39px"><span>16</span></div>
<div class="c " style="left:39px;width:64px"><span>Colin</span></div>
<div class="c " style="left:103px;width:188px"><span>Technical Support</span></div>
<div class="c " style="left:291px;width:98px"><span>Services</span></div>
<div class="c r" style="left:389px;width:82px"><span>1/16/2021</span></div>
<div class="c r" style="left:471px;width:90px"><i class="ic r"></i><span>1</span></div>
<div class="c r acc" style="left:561px;width:91px"><b class="bar o" style="width:1px"></b><em>$</em><span>35.00</span></div>
<div class="c r acc h" style="left:652px;width:98px"><b class="bar gr" style="width:0px"></b><em>$</em><span>35.00</span></div>
</div>
<div class="trow b1" style="top:444px">
<div class="c r" style="left:0px;width:39px"><span>17</span></div>
<div class="c " style="left:39px;width:64px"><span>Jerry</span></div>
<div class="c " style="left:103px;width:188px"><span>Soft Suite</span></div>
<div class="c " style="left:291px;width:98px"><span>Software</span></div>
<div class="c r" style="left:389px;width:82px"><span>1/17/2021</span></div>
<div class="c r" style="left:471px;width:90px"><i class="ic y"></i><span>4</span></div>
<div class="c r acc" style="left:561px;width:91px"><b class="bar o" style="width:10px"></b><em>$</em><span>560.00</span></div>
<div class="c r acc h" style="left:652px;width:98px"><b class="bar gr" style="width:7px"></b><em>$</em><span>2,240.00</span></div>
</div>
<div class="trow b2" style="top:469px">
<div class="c r" style="left:0px;width:39px"><span>18</span></div>
<div class="c " style="left:39px;width:64px"><span>Alice</span></div>
<div class="c " style="left:103px;width:188px"><span>1 Year License</span></div>
<div class="c " style="left:291px;width:98px"><span>License</span></div>
<div class="c r" style="left:389px;width:82px"><span>1/18/2021</span></div>
<div class="c r" style="left:471px;width:90px"><i class="ic y"></i><span>6</span></div>
<div class="c r acc tight" style="left:561px;width:91px"><b class="bar o" style="width:21px"></b><em>$</em><span>1,200.00</span></div>
<div class="c r acc h" style="left:652px;width:98px"><b class="bar gr" style="width:23px"></b><em>$</em><span>7,200.00</span></div>
</div>
<div class="trow b1" style="top:494px">
<div class="c r" style="left:0px;width:39px"><span>19</span></div>
<div class="c " style="left:39px;width:64px"><span>Alice</span></div>
<div class="c " style="left:103px;width:188px"><span>Memory card</span></div>
<div class="c " style="left:291px;width:98px"><span>Hardware</span></div>
<div class="c r" style="left:389px;width:82px"><span>1/19/2021</span></div>
<div class="c r" style="left:471px;width:90px"><i class="ic g"></i><span>8</span></div>
<div class="c r acc" style="left:561px;width:91px"><b class="bar o" style="width:2px"></b><em>$</em><span>136.00</span></div>
<div class="c r acc h" style="left:652px;width:98px"><b class="bar gr" style="width:3px"></b><em>$</em><span>1,088.00</span></div>
</div>
<div class="trow b2" style="top:519px">
<div class="c r" style="left:0px;width:39px"><span>20</span></div>
<div class="c " style="left:39px;width:64px"><span>Ann</span></div>
<div class="c " style="left:103px;width:188px"><span>Webcam</span></div>
<div class="c " style="left:291px;width:98px"><span>Hardware</span></div>
<div class="c r" style="left:389px;width:82px"><span>1/20/2021</span></div>
<div class="c r" style="left:471px;width:90px"><i class="ic y"></i><span>4</span></div>
<div class="c r acc" style="left:561px;width:91px"><b class="bar o" style="width:1px"></b><em>$</em><span>80.00</span></div>
<div class="c r acc h" style="left:652px;width:98px"><b class="bar gr" style="width:1px"></b><em>$</em><span>320.00</span></div>
</div>
<div class="seltint"></div><div class="selbox"></div>
</div>
<!-- scrollbars -->
<div class="abs" style="left:966px;top:148px;width:14px;height:522px;background:#ececec"></div>
<div class="abs sbtn" style="left:966px;top:149px;width:13px;height:13px"><svg width="7" height="4" viewBox="0 0 7 4" style="position:absolute;left:2px;top:3px"><path d="M0 4l3.500-4 3.500 4z" fill="#adadad"/></svg></div>
<div class="abs sthumb" style="left:966px;top:163px;width:13px;height:345px"><svg width="6" height="9" viewBox="0 0 6 9" style="position:absolute;left:2.500px;top:167px" stroke="#cfcfcf" fill="none"><path d="M0 .500h6M0 2.500h6M0 4.500h6M0 6.500h6M0 8.500h6"/></svg></div>
<div class="abs sbtn" style="left:966px;top:656px;width:13px;height:13px"><svg width="7" height="4" viewBox="0 0 7 4" style="position:absolute;left:2px;top:4px"><path d="M0 0l3.500 4 3.500-4z" fill="#adadad"/></svg></div>
<div class="abs" style="left:40px;top:670px;width:940px;height:14px;background:#ececec"></div>
<div class="abs sbtn" style="left:41px;top:671px;width:13px;height:12px"><svg width="4" height="7" viewBox="0 0 4 7" style="position:absolute;left:4px;top:2px"><path d="M4 0l-4 3.500 4 3.500z" fill="#adadad"/></svg></div>
<div class="abs sthumb" style="left:55px;top:671px;width:807px;height:12px"><svg width="9" height="6" viewBox="0 0 9 6" style="position:absolute;left:398px;top:2px" stroke="#cfcfcf" fill="none"><path d="M.500 0v6M2.500 0v6M4.500 0v6M6.500 0v6M8.500 0v6"/></svg></div>
<div class="abs sbtn" style="left:953px;top:671px;width:13px;height:12px"><svg width="4" height="7" viewBox="0 0 4 7" style="position:absolute;left:4px;top:2px"><path d="M0 0l4 3.500-4 3.500z" fill="#adadad"/></svg></div>
<div class="abs" style="left:980px;top:123px;width:1px;height:561px;background:#cbcbcb"></div>
<!-- right panel -->
<div id="rp">
  <div class="lb" style="left:15px;top:7px">Fill</div>
  <div class="combo" style="left:15px;top:22px;width:194px">Color Fill<svg class="car" viewBox="0 0 7 5" fill="none" stroke="#444" stroke-width="1.100"><path d="M.800 1l2.700 2.700 2.700-2.700"/></svg></div>
  <div class="combo" style="left:15px;top:52px;width:45px;padding:0"><div class="abs" style="left:1px;top:1px;width:31px;height:18px;background:#cbe4b4;border:1px solid #bdbdbd"></div><svg class="car" style="right:3px" viewBox="0 0 7 5" fill="none" stroke="#444" stroke-width="1.100"><path d="M.800 1l2.700 2.700 2.700-2.700"/></svg></div>
  <div class="hr" style="top:82px"></div>
  <div class="lb" style="left:15px;top:91px">Borders Style</div>
  <div class="combo" style="left:15px;top:114px;width:93px"><div class="abs" style="left:11px;top:9px;width:60px;height:1px;background:#000"></div><svg class="car" viewBox="0 0 7 5" fill="none" stroke="#444" stroke-width="1.100"><path d="M.800 1l2.700 2.700 2.700-2.700"/></svg></div>
  <div class="tx" style="left:130px;top:117px">Color</div>
  <div class="combo" style="left:164px;top:114px;width:45px;padding:0"><div class="abs" style="left:1px;top:1px;width:31px;height:18px;background:#000"></div><svg class="car" style="right:3px" viewBox="0 0 7 5" fill="none" stroke="#444" stroke-width="1.100"><path d="M.800 1l2.700 2.700 2.700-2.700"/></svg></div>
  <div class="tx" style="left:15px;top:144px;line-height:15px">Select borders you want to change<br>applying style chosen above</div>
  <!-- border buttons -->
  <div class="bb" style="left:16px;top:183px"><svg viewBox="0 0 20 20" fill="none"><path d="M3 3.500h13M3 15.500h13M3.500 3v13M15.500 3v13M9.500 3v13M3 9.500h13" stroke="#444" stroke-width="1.300"/></svg></div>
  <div class="bb" style="left:40px;top:183px"><svg viewBox="0 0 20 20" fill="none"><path d="M3 3.500h13M3 15.500h13M3.500 3v13M15.500 3v13M9.500 3v13M3 9.500h13" stroke="#8a8a8a" stroke-dasharray="1 1"/></svg></div>
  <div class="bb" style="left:64px;top:183px"><svg viewBox="0 0 20 20" fill="none"><path d="M3 3.500h13M3 15.500h13M3.500 3v13M15.500 3v13" stroke="#8a8a8a" stroke-dasharray="1 1"/><path d="M9.500 3v13M3 9.500h13" stroke="#444" stroke-width="1.300"/></svg></div>
  <div class="bb" style="left:88px;top:183px"><svg viewBox="0 0 20 20" fill="none"><path d="M9.500 3v13M3 9.500h13" stroke="#8a8a8a" stroke-dasharray="1 1"/><path d="M3 3.500h13M3 15.500h13M3.500 3v13M15.500 3v13" stroke="#444" stroke-width="1.300"/></svg></div>
  <div class="bb" style="left:112px;top:183px"><svg viewBox="0 0 20 20" fill="none"><path d="M3 3.500h13M3 15.500h13M3.500 3v13M15.500 3v13" stroke="#8a8a8a" stroke-dasharray="1 1"/><path d="M3.500 15.500l12-12" stroke="#444" stroke-width="1.300"/></svg></div>
  <div class="bb" style="left:136px;top:183px"><svg viewBox="0 0 20 20" fill="none"><path d="M3 3.500h13M3 15.500h13M3.500 3v13M15.500 3v13" stroke="#8a8a8a" stroke-dasharray="1 1"/><path d="M3.500 3.500l12 12" stroke="#444" stroke-width="1.300"/></svg></div>
  <div class="bb" style="left:16px;top:212px"><svg viewBox="0 0 20 20" fill="none"><path d="M3 3.500h13M3 15.500h13M15.500 3v13M9.500 3v13M3 9.500h13" stroke="#8a8a8a" stroke-dasharray="1 1"/><path d="M3.500 3v13" stroke="#444" stroke-width="1.300"/></svg></div>
  <div class="bb" style="left:40px;top:212px"><svg viewBox="0 0 20 20" fill="none"><path d="M3 3.500h13M3 15.500h13M3.500 3v13M15.500 3v13M3 9.500h13" stroke="#8a8a8a" stroke-dasharray="1 1"/><path d="M9.500 3v13" stroke="#444" stroke-width="1.300"/></svg></div>
  <div class="bb" style="left:64px;top:212px"><svg viewBox="0 0 20 20" fill="none"><path d="M3 3.500h13M3 15.500h13M3.500 3v13M9.500 3v13M3 9.500h13" stroke="#8a8a8a" stroke-dasharray="1 1"/><path d="M15.500 3v13" stroke="#444" stroke-width="1.300"/></svg></div>
  <div class="bb" style="left:88px;top:212px"><svg viewBox="0 0 20 20" fill="none"><path d="M3 15.500h13M3.500 3v13M15.500 3v13M9.500 3v13M3 9.500h13" stroke="#8a8a8a" stroke-dasharray="1 1"/><path d="M3 3.500h13" stroke="#444" stroke-width="1.300"/></svg></div>
  <div class="bb" style="left:112px;top:212px"><svg viewBox="0 0 20 20" fill="none"><path d="M3 3.500h13M3 15.500h13M3.500 3v13M15.500 3v13M9.500 3v13" stroke="#8a8a8a" stroke-dasharray="1 1"/><path d="M3 9.500h13" stroke="#444" stroke-width="1.300"/></svg></div>
  <div class="bb" style="left:136px;top:212px"><svg viewBox="0 0 20 20" fill="none"><path d="M3 3.500h13M3.500 3v13M15.500 3v13M9.500 3v13M3 9.500h13" stroke="#8a8a8a" stroke-dasharray="1 1"/><path d="M3 15.500h13" stroke="#444" stroke-width="1.300"/></svg></div>
  <div class="hr" style="top:240px"></div>
  <div class="lb" style="left:15px;top:249px">Indent</div>
  <div class="combo spin" style="left:15px;top:264px;width:60px"><span class="v" style="right:19px">0</span><svg class="abs" style="right:5px;top:4px" width="7" height="13" viewBox="0 0 7 13" fill="none" stroke="#444" stroke-width="1.100"><path d="M.800 3.700l2.700-2.700 2.700 2.700M.800 9.300l2.700 2.700 2.700-2.700"/></svg></div>
  <div class="lb" style="left:15px;top:302px">Text Orientation</div>
  <div class="tx" style="left:15px;top:329px">Angle</div>
  <div class="combo spin" style="left:52px;top:325px;width:59px"><span class="v" style="right:19px">0 °</span><svg class="abs" style="right:5px;top:4px" width="7" height="13" viewBox="0 0 7 13" fill="none" stroke="#444" stroke-width="1.100"><path d="M.800 3.700l2.700-2.700 2.700 2.700M.800 9.300l2.700 2.700 2.700-2.700"/></svg></div>
  <div class="lb" style="left:15px;top:363px">Text Control</div>
  <div class="cb" style="left:15px;top:386px"></div><div class="tx" style="left:37px;top:386px">Wrap text</div>
  <div class="cb" style="left:15px;top:409px"></div><div class="tx" style="left:37px;top:409px">Shrink to fit</div>
  <div class="hr" style="top:432px"></div>
  <svg class="abs" style="left:39px;top:441px" width="20" height="20" viewBox="0 0 20 20" fill="none" stroke="#444"><path d="M3.500 3.500h11v11h-11zM3.500 6.500h11M3.500 10.500h11"/><path d="M3.500 10.500h4v4h-4z" fill="#444"/><path d="M8.500 11.500h8v7h-8z" fill="#f7f7f7"/><path d="M11 13.500l3 1.500-3 1.500z" stroke-width=".9"/></svg>
  <div class="tx" style="left:63px;top:444px">Conditional formatting</div>
  <svg class="abs car" style="left:176px;top:449px" viewBox="0 0 7 5" fill="none" stroke="#444" stroke-width="1.100"><path d="M.800 1l2.700 2.700 2.700-2.700"/></svg>
</div>
<!-- right strip -->
<div id="rs">
  <div class="abs" style="left:0;top:15px;width:39px;height:30px;background:#7d858c"></div>
  <svg class="ri" style="top:20px" viewBox="0 0 20 20" fill="none" stroke="#fff" stroke-width="1.200"><path d="M2.500 4.500h15v11h-15z"/><path d="M5.500 7.500h9v5h-9z"/></svg>
  <svg class="ri" style="top:58px" viewBox="0 0 20 20" fill="none" stroke="#adadad" stroke-width="1.200"><path d="M2.500 5.500h15v10h-15zM2.500 8.500h15M2.500 12h15M7.500 5.500v10M12.500 5.500v10"/></svg>
  <svg class="ri" style="top:96px" viewBox="0 0 20 20" fill="none" stroke="#adadad" stroke-width="1.200"><path d="M8 12.500h-5.500v-9h9v3"/><circle cx="12.500" cy="12" r="5"/></svg>
  <svg class="ri" style="top:134px" viewBox="0 0 20 20" fill="none" stroke="#adadad" stroke-width="1.200"><path d="M2.500 3.500h15v13h-15z"/><circle cx="6.500" cy="7.500" r="1.500"/><path d="M2.500 14l4.500-4 3.500 3 2.500-2 4.500 4"/></svg>
  <svg class="ri" style="top:172px" viewBox="0 0 20 20" fill="none" stroke="#adadad" stroke-width="1.200"><path d="M3.500 11.500h3v5h-3zM8.500 8.500h3v8h-3zM13.500 3.500h3v13h-3z"/></svg>
  <svg class="ri" style="top:210px" viewBox="0 0 20 20" fill="none" stroke="#adadad" stroke-width="1.200"><path d="M10.500 3.500v13M13.500 3.500v13M15 3.500h-6.500a3.500 3.500 0 0 0 0 7h2" /><path d="M8.500 3.500a3.500 3.500 0 0 0 0 7h2v-7z" fill="#adadad"/></svg>
  <div class="abs" style="left:0;top:246px;width:39px;text-align:center;font:15px/18px 'Liberation Sans',sans-serif;color:#adadad;letter-spacing:-1px">Ta</div>
  <svg class="ri" style="top:260px" viewBox="0 0 20 20" fill="none" stroke="#adadad" stroke-width="1.200"><path d="M4 8c3.500-4 8.500-4 12 0"/></svg>
  <svg class="ri" style="top:286px" viewBox="0 0 20 20" fill="none" stroke="#adadad" stroke-width="1.200"><path d="M2.500 3.500h4v4h-4zM2.500 10.500h4v6h-4zM9.500 3.500h8M17.500 8v4.500h-6M13.500 10.500l-2 2 2 2"/></svg>
  <svg class="ri" style="top:324px" viewBox="0 0 20 20" fill="none" stroke="#adadad" stroke-width="1.200"><path d="M2.500 3.500h13v3h-13zM2.500 8.500h13M2.500 11.500h7M2.500 14.500h7M2.500 3.500v11"/><path d="M10.500 11h8l-3 3.500v4l-2-1v-3z" fill="#adadad" stroke="none"/></svg>
</div>
<!-- status bar -->
<div id="sb">
  <svg class="abs" style="left:16.500px;top:8px" width="10" height="9" viewBox="0 0 10 9"><path d="M1.500 0v9" stroke="#adadad" stroke-width="1.400"/><path d="M10 0L3.500 4.500 10 9z" fill="#adadad"/></svg>
  <svg class="abs" style="left:41px;top:8px" width="7" height="9" viewBox="0 0 7 9"><path d="M7 0L0 4.500 7 9z" fill="#adadad"/></svg>
  <svg class="abs" style="left:65px;top:8px" width="7" height="9" viewBox="0 0 7 9"><path d="M0 0l7 4.500L0 9z" fill="#adadad"/></svg>
  <svg class="abs" style="left:86px;top:8px" width="10" height="9" viewBox="0 0 10 9"><path d="M8.500 0v9" stroke="#adadad" stroke-width="1.400"/><path d="M0 0l6.500 4.500L0 9z" fill="#adadad"/></svg>
  <div class="vs" style="left:115px"></div>
  <svg class="abs" style="left:128px;top:7px" width="11" height="11" viewBox="0 0 11 11" stroke="#444" stroke-width="1"><path d="M5.500 0v11M0 5.500h11"/></svg>
  <div class="vs" style="left:150px"></div>
  <div class="st" style="left:151px;width:86px">Source data</div>
  <div class="st" style="left:237px;width:89px">Source data2</div>
  <div class="st" style="left:326px;width:89px">Source data3</div>
  <div class="st" style="left:415px;width:89px">Source data4</div>
  <div class="st" style="left:504px;width:58px">Sheet1</div>
  <div class="st" style="left:562px;width:70px">New data</div>
  <div class="st act" style="left:632px;width:140px">Conditional formatting</div>
  <div class="vs" style="left:948px"></div>
  <div class="abs" style="left:977px;top:0;line-height:24px;font-size:11px">Count: 24</div>
  <div class="vs" style="left:1077px"></div>
  <svg class="abs" style="left:1096px;top:12px" width="12" height="1" viewBox="0 0 12 1"><path d="M0 .500h12" stroke="#444" stroke-width="1.200"/></svg>
  <div class="abs" style="left:1115px;top:0;width:80px;text-align:center;line-height:24px;font-size:11px">Zoom 100%</div>
  <svg class="abs" style="left:1202px;top:6px" width="12" height="12" viewBox="0 0 12 12" stroke="#444" stroke-width="1.200"><path d="M6 0v12M0 6h12"/></svg>
</div>
<!-- overlay -->
<div id="mask"></div>
<!-- dialog -->
<div id="dlg"><div id="dli">
  <div class="dh">New Formatting Rule</div>
  <svg class="abs" style="left:469px;top:11px" width="11" height="11" viewBox="0 0 11 11" stroke="#666" stroke-width="1"><path d="M.500 .500l10 10M10.500 .500l-10 10"/></svg>
  <div class="dl" style="left:10px;top:41px">Rule</div>
  <div class="combo" style="left:10px;top:56px;width:150px">Text<svg class="car" viewBox="0 0 7 5" fill="none" stroke="#444" stroke-width="1.100"><path d="M.800 1l2.700 2.700 2.700-2.700"/></svg></div>
  <div class="combo" style="left:10px;top:86px;width:150px">Contains<svg class="car" viewBox="0 0 7 5" fill="none" stroke="#444" stroke-width="1.100"><path d="M.800 1l2.700 2.700 2.700-2.700"/></svg></div>
  <div class="combo" style="left:170px;top:86px;width:150px">=$D$15<svg class="abs" style="right:1.500px;top:3px" width="15" height="14" viewBox="0 0 15 14" fill="none" stroke="#444" stroke-width="1.200"><path d="M.600 .600h13.800v12.800h-13.800zM7.500 .600v12.800M.600 7h13.800"/></svg></div>
  <div class="dl" style="left:10px;top:124px">Format</div>
  <div class="combo" style="left:10px;top:139px;width:150px;text-align:center;padding-right:10px">Presets<svg class="car" viewBox="0 0 7 5" fill="none" stroke="#444" stroke-width="1.100"><path d="M.800 1l2.700 2.700 2.700-2.700"/></svg></div>
  <div class="abs" style="left:14.500px;top:170px;font:bold 13.500px/20px 'Liberation Sans',sans-serif;color:#444">B</div>
  <div class="abs" style="left:40px;top:170px;font:italic 14.500px/20px 'Liberation Serif',serif;color:#444">I</div>
  <div class="abs" style="left:63.500px;top:170px;font:13.500px/20px 'Liberation Sans',sans-serif;color:#444">U</div>
  <div class="abs" style="left:64px;top:186px;width:10px;height:1px;background:#444"></div>
  <div class="abs" style="left:88.500px;top:170px;font:12.500px/20px 'Liberation Sans',sans-serif;color:#444">S</div>
  <div class="abs" style="left:86px;top:180px;width:12px;height:1px;background:#444"></div>
  <div class="abs" style="left:112.500px;top:169.500px;font:14px/20px 'Liberation Sans',sans-serif;color:#444">A</div>
  <div class="abs" style="left:111px;top:186px;width:14px;height:3px;background:#9c5700"></div>
  <svg class="abs car" style="left:130px;top:178px" viewBox="0 0 7 5" fill="none" stroke="#444" stroke-width="1.100"><path d="M.800 1l2.700 2.700 2.700-2.700"/></svg>
  <svg class="abs" style="left:142px;top:169px" width="20" height="20" viewBox="0 0 20 20" fill="none" stroke="#444" stroke-width="1.100"><path d="M9 5.500l5.500 5.500-5.500 5.500-5.500-5.500z"/><path d="M6 4l4.500 4.500"/><path d="M15.700 12.300c.800 1.100 1.100 1.700 1.100 2.200a1.100 1.100 0 0 1-2.200 0c0-.500.300-1.100 1.100-2.200z" fill="#444" stroke="none"/></svg>
  <div class="abs" style="left:146px;top:186px;width:13px;height:3px;background:#ffeb9c"></div>
  <svg class="abs car" style="left:164px;top:178px" viewBox="0 0 7 5" fill="none" stroke="#444" stroke-width="1.100"><path d="M.800 1l2.700 2.700 2.700-2.700"/></svg>
  <svg class="abs" style="left:179px;top:170px" width="20" height="20" viewBox="0 0 20 20" fill="none" stroke="#444"><path d="M4.500 4.500h12v12h-12z"/><path d="M10.500 6v10M6 10.500h10" stroke-dasharray="1 1" stroke="#888"/></svg>
  <svg class="abs car" style="left:201px;top:178px" viewBox="0 0 7 5" fill="none" stroke="#444" stroke-width="1.100"><path d="M.800 1l2.700 2.700 2.700-2.700"/></svg>
  <div class="combo" style="left:216px;top:169px;width:113px">General<svg class="car" viewBox="0 0 7 5" fill="none" stroke="#444" stroke-width="1.100"><path d="M.800 1l2.700 2.700 2.700-2.700"/></svg></div>
  <div class="combo" style="left:339px;top:169px;width:80px;text-align:center;padding:0">Clear</div>
  <div class="dl" style="left:10px;top:207px">Preview</div>
  <div class="abs" style="left:10px;top:222px;width:150px;height:40px;border:1px solid #cfcfcf;background:#fff;padding:3px"><div style="width:100%;height:100%;background:#ffeb9c;color:#9c5700;text-align:center;font:12.200px/34px 'Liberation Sans',sans-serif">AaBbCcYyZz</div></div>
  <div class="abs" style="left:-1px;top:304px;width:493px;height:1px;background:#d8dadc"></div>
  <div class="btn pri" style="left:155px;top:319px">OK</div>
  <div class="btn" style="left:251px;top:319px">Cancel</div>
</div></div>
</body>
</html>
